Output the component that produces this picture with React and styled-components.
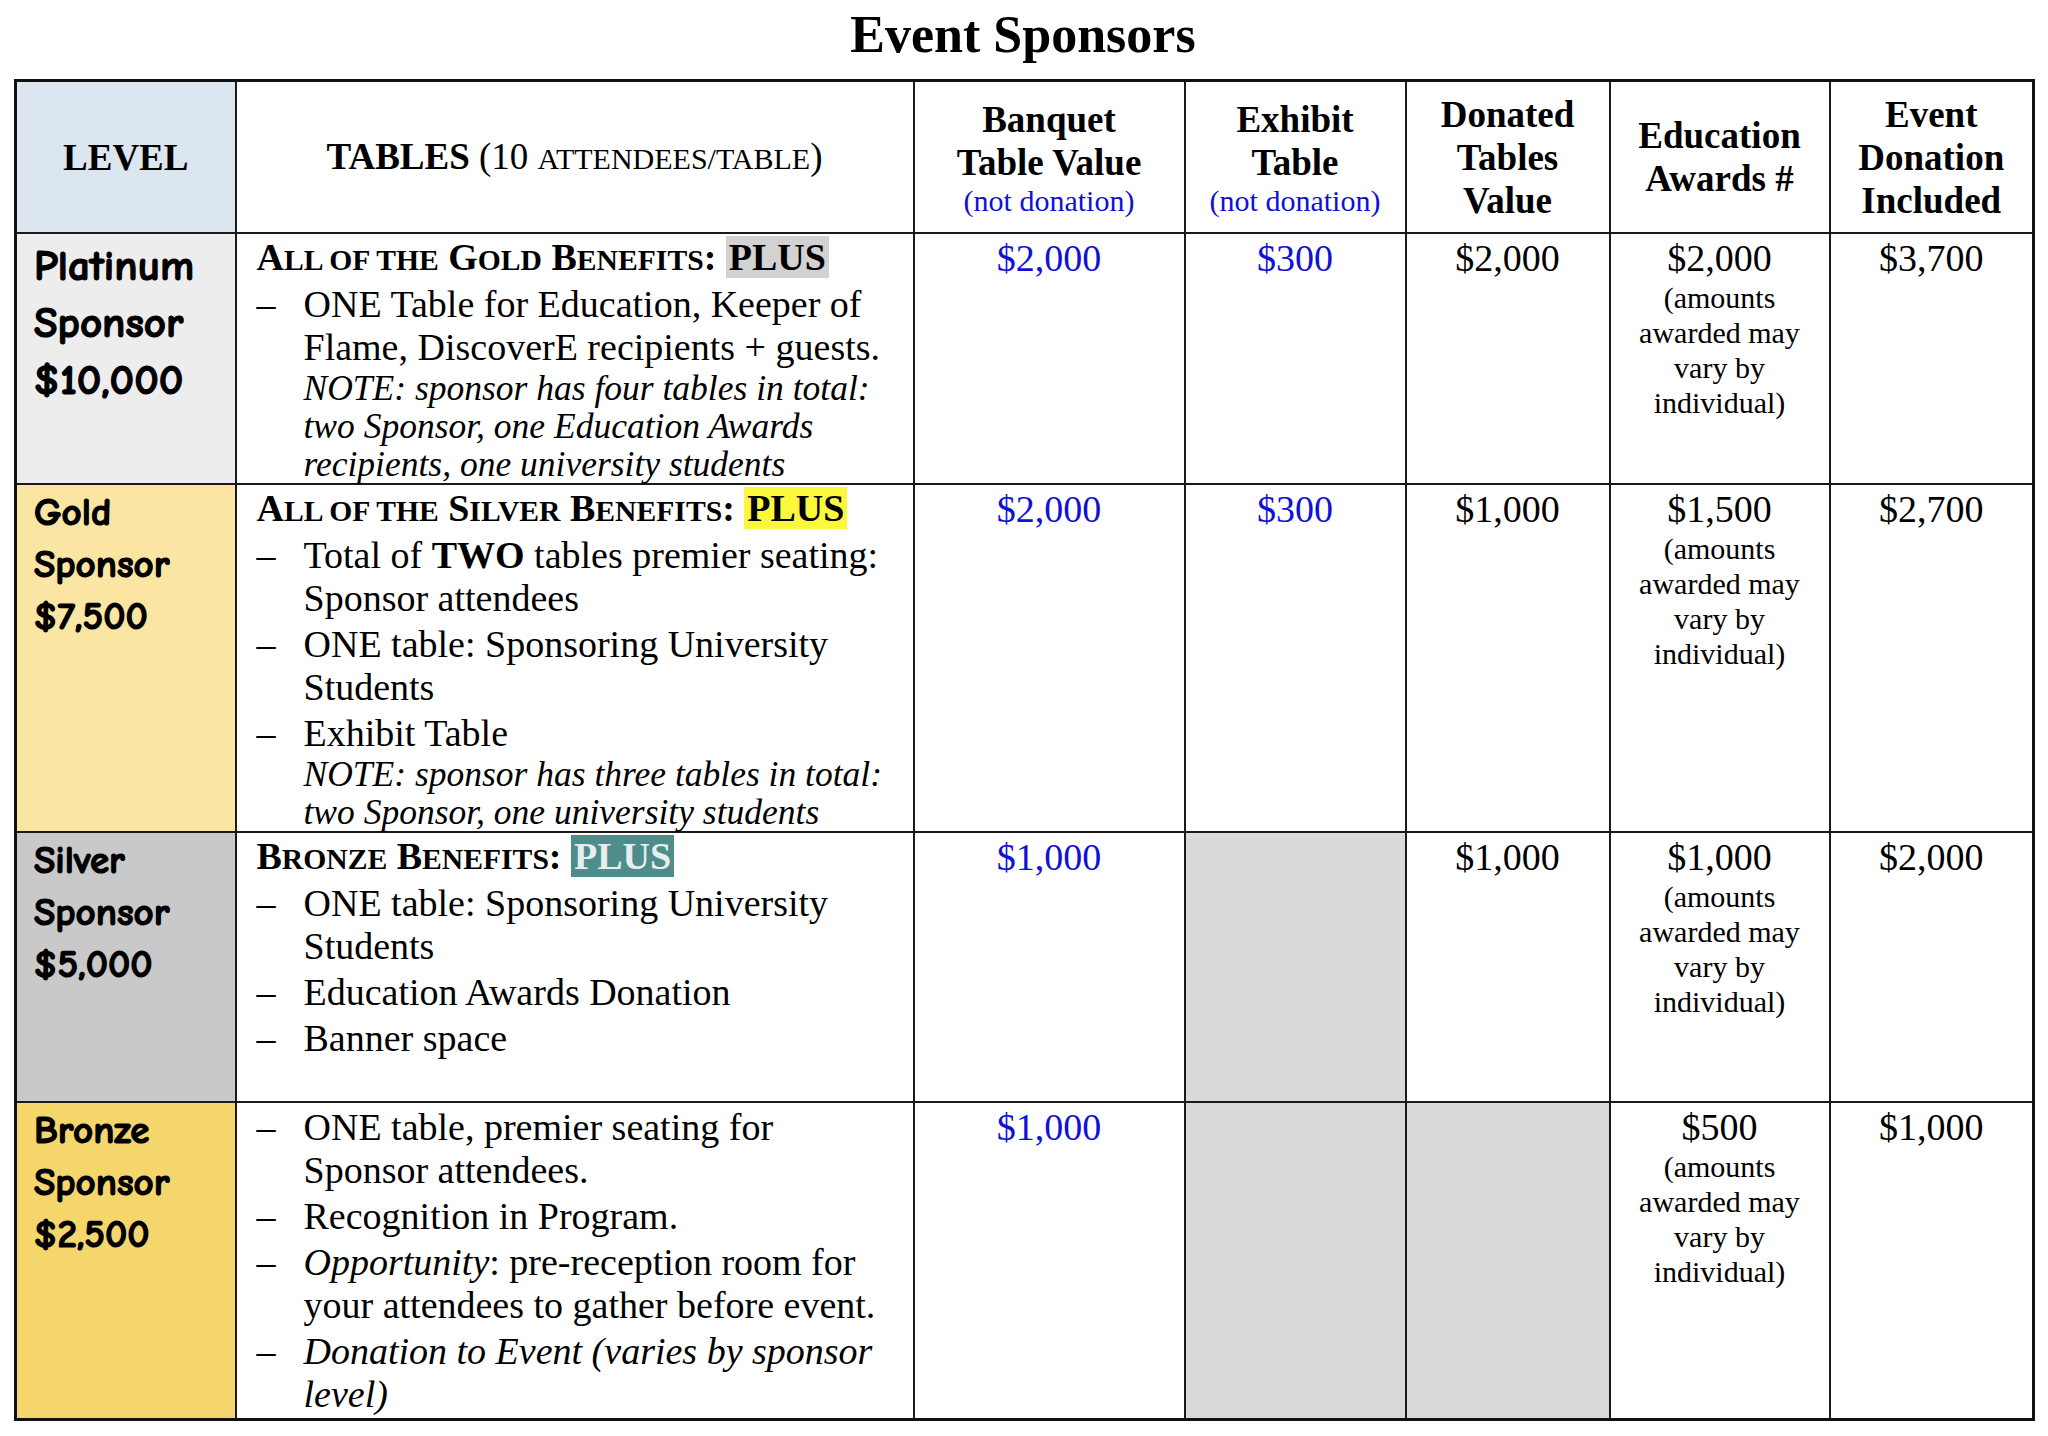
import React from "react";
import styled, { createGlobalStyle } from "styled-components";

const Global = createGlobalStyle`
  html, body { margin: 0; padding: 0; background: #ffffff; }
  body { font-family: "Liberation Serif", "Times New Roman", serif; color: #000; }
`;

const Page = styled.div`
  width: 2048px;
  box-sizing: border-box;
  padding: 0 16px 0 14px;
`;

const Title = styled.h1`
  margin: 0;
  height: 79px;
  font-size: 52px;
  line-height: 70px;
  font-weight: 700;
  text-align: center;
`;

const Table = styled.table`
  width: 2018px;
  border-collapse: collapse;
  table-layout: fixed;
  border: 3px solid #111;
`;

const HeadCell = styled.th`
  border: 2px solid #1a1a1a;
  height: 150px;
  padding: 0 8px;
  font-size: 37px;
  line-height: 43px;
  font-weight: 700;
  text-align: center;
  vertical-align: middle;
  background: ${(p) => p.$bg || "#fff"};
`;

const SubNote = styled.span`
  display: block;
  font-weight: 400;
  font-size: 30px;
  line-height: 33px;
  color: #1010d8;
`;

const Regular = styled.span`
  font-weight: 400;
`;

const Small = styled.span`
  font-size: ${(p) => p.$size || "0.78em"};
`;

const LevelCell = styled.td`
  border: 2px solid #1a1a1a;
  height: ${(p) => p.$h}px;
  padding: ${(p) => (p.$big ? "4px" : "2px")} 8px 0 17px;
  vertical-align: top;
  background: ${(p) => p.$bg};
  font-family: "Comic Sans MS", "Comic Neue", "DejaVu Sans", sans-serif;
  font-weight: 700;
  font-size: ${(p) => (p.$big ? 43 : 39)}px;
  line-height: ${(p) => (p.$big ? 57 : 52)}px;
  -webkit-text-stroke: 1.2px #000;
  white-space: nowrap;
`;

const BodyCell = styled.td`
  border: 2px solid #1a1a1a;
  padding: 2px 20px 0 20px;
  vertical-align: top;
  font-size: 38px;
  line-height: 43px;
`;

const Heading = styled.div`
  font-weight: 700;
`;

const Plus = styled.span`
  background: ${(p) => p.$bg};
  color: ${(p) => p.$color || "#000"};
  padding: 0 3px;
`;

const List = styled.ul`
  list-style: none;
  margin: 0;
  padding: 0;
`;

const Item = styled.li`
  display: grid;
  grid-template-columns: 47px 1fr;
  margin-top: ${(p) => (p.$first ? 1 : 3)}px;
`;

const Dash = styled.span``;

const Note = styled.div`
  padding-left: 47px;
  font-style: italic;
  font-size: 35.5px;
  line-height: 38px;
`;

const ValueCell = styled.td`
  border: 2px solid #1a1a1a;
  padding: 3px 6px 0 6px;
  vertical-align: top;
  text-align: center;
  font-size: 38px;
  line-height: 43px;
  color: ${(p) => (p.$blue ? "#1010d8" : "#000")};
  background: ${(p) => (p.$gray ? "#d9d9d9" : "#fff")};
`;

const AwardNote = styled.div`
  font-size: 30px;
  line-height: 35px;
`;

const cols = [220, 678, 271, 221, 204, 220, 204];

const Award = ({ value }) => (
  <>
    {value}
    <AwardNote>
      (amounts
      <br />
      awarded may
      <br />
      vary by
      <br />
      individual)
    </AwardNote>
  </>
);

export default function App() {
  return (
    <>
      <Global />
      <Page>
        <Title>Event Sponsors</Title>
        <Table>
          <colgroup>
            {cols.map((w, i) => (
              <col key={i} style={{ width: w }} />
            ))}
          </colgroup>
          <thead>
            <tr>
              <HeadCell $bg="#dce6f1">LEVEL</HeadCell>
              <HeadCell>
                TABLES{" "}
                <Regular>
                  (10 <Small $size="30px">ATTENDEES/TABLE</Small>)
                </Regular>
              </HeadCell>
              <HeadCell>
                Banquet
                <br />
                Table Value
                <SubNote>(not donation)</SubNote>
              </HeadCell>
              <HeadCell>
                Exhibit
                <br />
                Table
                <SubNote>(not donation)</SubNote>
              </HeadCell>
              <HeadCell>
                Donated
                <br />
                Tables
                <br />
                Value
              </HeadCell>
              <HeadCell>
                Education
                <br />
                Awards #
              </HeadCell>
              <HeadCell>
                Event
                <br />
                Donation
                <br />
                Included
              </HeadCell>
            </tr>
          </thead>
          <tbody>
            <tr>
              <LevelCell $h={241} $big $bg="#ededed">
                Platinum
                <br />
                Sponsor
                <br />
                $10,000
              </LevelCell>
              <BodyCell>
                <Heading>
                  A<Small>LL OF THE</Small> G<Small>OLD</Small> B<Small>ENEFITS</Small>:{" "}
                  <Plus $bg="#d2d2d2">PLUS</Plus>
                </Heading>
                <List>
                  <Item $first>
                    <Dash>–</Dash>
                    <span>ONE Table for Education, Keeper of Flame, DiscoverE recipients + guests.</span>
                  </Item>
                </List>
                <Note>
                  NOTE: sponsor has four tables in total: two Sponsor, one Education Awards recipients, one university students
                </Note>
              </BodyCell>
              <ValueCell $blue>$2,000</ValueCell>
              <ValueCell $blue>$300</ValueCell>
              <ValueCell>$2,000</ValueCell>
              <ValueCell>
                <Award value="$2,000" />
              </ValueCell>
              <ValueCell>$3,700</ValueCell>
            </tr>
            <tr>
              <LevelCell $h={338} $bg="#fae5a3">
                Gold
                <br />
                Sponsor
                <br />
                $7,500
              </LevelCell>
              <BodyCell>
                <Heading>
                  A<Small>LL OF THE</Small> S<Small>ILVER</Small> B<Small>ENEFITS</Small>:{" "}
                  <Plus $bg="#fbf73a">PLUS</Plus>
                </Heading>
                <List>
                  <Item $first>
                    <Dash>–</Dash>
                    <span>
                      Total of <b>TWO</b> tables premier seating: Sponsor attendees
                    </span>
                  </Item>
                  <Item>
                    <Dash>–</Dash>
                    <span>ONE table: Sponsoring University Students</span>
                  </Item>
                  <Item>
                    <Dash>–</Dash>
                    <span>Exhibit Table</span>
                  </Item>
                </List>
                <Note>NOTE: sponsor has three tables in total: two Sponsor, one university students</Note>
              </BodyCell>
              <ValueCell $blue>$2,000</ValueCell>
              <ValueCell $blue>$300</ValueCell>
              <ValueCell>$1,000</ValueCell>
              <ValueCell>
                <Award value="$1,500" />
              </ValueCell>
              <ValueCell>$2,700</ValueCell>
            </tr>
            <tr>
              <LevelCell $h={266} $bg="#c9c9c9">
                Silver
                <br />
                Sponsor
                <br />
                $5,000
              </LevelCell>
              <BodyCell>
                <Heading>
                  B<Small>RONZE</Small> B<Small>ENEFITS</Small>:{" "}
                  <Plus $bg="#4f8d8b" $color="#e6eeee">
                    PLUS
                  </Plus>
                </Heading>
                <List>
                  <Item $first>
                    <Dash>–</Dash>
                    <span>ONE table: Sponsoring University Students</span>
                  </Item>
                  <Item>
                    <Dash>–</Dash>
                    <span>Education Awards Donation</span>
                  </Item>
                  <Item>
                    <Dash>–</Dash>
                    <span>Banner space</span>
                  </Item>
                </List>
              </BodyCell>
              <ValueCell $blue>$1,000</ValueCell>
              <ValueCell $gray />
              <ValueCell>$1,000</ValueCell>
              <ValueCell>
                <Award value="$1,000" />
              </ValueCell>
              <ValueCell>$2,000</ValueCell>
            </tr>
            <tr>
              <LevelCell $h={313} $bg="#f4d66d">
                Bronze
                <br />
                Sponsor
                <br />
                $2,500
              </LevelCell>
              <BodyCell>
                <List>
                  <Item $first>
                    <Dash>–</Dash>
                    <span>ONE table, premier seating for Sponsor attendees.</span>
                  </Item>
                  <Item>
                    <Dash>–</Dash>
                    <span>Recognition in Program.</span>
                  </Item>
                  <Item>
                    <Dash>–</Dash>
                    <span>
                      <i>Opportunity</i>: pre-reception room for your attendees to gather before event.
                    </span>
                  </Item>
                  <Item>
                    <Dash>–</Dash>
                    <i>Donation to Event (varies by sponsor level)</i>
                  </Item>
                </List>
              </BodyCell>
              <ValueCell $blue>$1,000</ValueCell>
              <ValueCell $gray />
              <ValueCell $gray />
              <ValueCell>
                <Award value="$500" />
              </ValueCell>
              <ValueCell>$1,000</ValueCell>
            </tr>
          </tbody>
        </Table>
      </Page>
    </>
  );
}
